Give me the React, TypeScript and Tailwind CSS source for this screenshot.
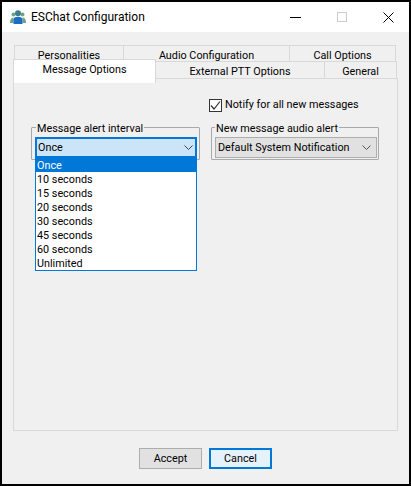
import React from "react";

const font = { fontFamily: 'Roboto, "Noto Sans", sans-serif' };

function Chevron({ color }: { color: string }) {
  return (
    <svg width="9" height="5" viewBox="0 0 9 5" fill="none">
      <path d="M0.5 0.5 L4.5 4.5 L8.5 0.5" stroke={color} strokeWidth="1" />
    </svg>
  );
}

function Logo() {
  return (
    <svg width="16" height="14" viewBox="0 0 16 14" className="-mt-px">
      <circle cx="3.5" cy="4.5" r="2" fill="#6fa384" />
      <circle cx="12.5" cy="4.5" r="2" fill="#6fa384" />
      <path d="M0 13 C0 10 1 7.5 3.5 7.5 L3.5 13 Z" fill="#6fa384" />
      <path d="M16 13 C16 10 15 7.5 12.5 7.5 L12.5 13 Z" fill="#6fa384" />
      <circle cx="8" cy="3.2" r="3" fill="#3f7f8c" />
      <path d="M3.5 14 L3.5 9.5 C3.5 7.5 6 6.8 8 6.8 C10 6.8 12.5 7.5 12.5 9.5 L12.5 14 Z" fill="#1a6fc4" />
    </svg>
  );
}

const items = ["10 seconds", "15 seconds", "20 seconds", "30 seconds", "45 seconds", "60 seconds", "Unlimited"];

export default function App() {
  return (
    <div
      className="w-[411px] h-[486px] border-2 border-black bg-[#f0f0f0] flex flex-col text-[10.8px] leading-[14px] text-[#000000] overflow-hidden"
      style={font}
    >
      <div className="h-[30px] bg-white flex items-center shrink-0">
        <div className="ml-[8px] w-[17px] flex"><Logo /></div>
        <span className="ml-[4px] text-[12px]">ESChat Configuration</span>
        <div className="ml-auto flex items-center">
          <div className="w-[11px] h-px bg-black mr-[36px]" />
          <div className="w-[10px] h-[10px] border border-[#cccccc] mr-[36px]" />
          <svg width="11" height="11" viewBox="0 0 11 11" className="mr-[15px]">
            <path d="M0.5 0.5 L10.5 10.5 M10.5 0.5 L0.5 10.5" stroke="#000" strokeWidth="1" />
          </svg>
        </div>
      </div>

      <div className="flex-1 flex flex-col px-[11px] pt-[13px]">
        <div className="flex h-[16px] ml-[1px] w-[382px] relative">
          <div className="w-[110px] border border-b-0 border-[#d9d9d9] text-center pt-[3px]">Personalities</div>
          <div className="w-[166px] border border-b-0 border-l-0 border-[#d9d9d9] text-center pt-[3px]">Audio Configuration</div>
          <div className="w-[106px] border border-b-0 border-l-0 border-[#d9d9d9] text-center pt-[3px]">Call Options</div>
        </div>
        <div className="flex h-[18px] w-[384px] relative z-10">
          <div className="w-[143px] h-[24px] -mt-[2px] bg-white border border-b-0 border-[#d9d9d9] text-center pt-[3px] z-10 relative">
            Message Options
            <div className="absolute left-0 right-0 top-[20px] h-[3px] bg-white" />
          </div>
          <div className="w-[169px] border border-l-0 border-[#d9d9d9] text-center pt-[3px]">External PTT Options</div>
          <div className="w-[72px] border border-l-0 border-[#d9d9d9] text-center pt-[3px]">General</div>
        </div>

        <div className="w-[385px] h-[353px] border border-[#d9d9d9] bg-[#f0f0f0] px-[17px] shrink-0 -mt-px">
          <div className="flex items-center h-[14px] mt-[19px] ml-[178px]">
            <div className="w-[13px] h-[13px] border border-[#333333] bg-white flex items-center justify-center shrink-0">
              <svg width="11" height="11" viewBox="0 0 11 11" fill="none">
                <path d="M1 5.5 L4 9 L10 1.5" stroke="#333" strokeWidth="1.2" />
              </svg>
            </div>
            <span className="ml-[3px] whitespace-nowrap">Notify for all new messages</span>
          </div>

          <div className="flex mt-[15px] gap-[11px]">
            <div className="relative w-[169px] h-[33px] border border-[#a9a9a9] rounded-[1px] px-[3px] pt-[9px]">
              <span className="absolute left-[4px] -top-[6px] bg-[#f0f0f0] px-px whitespace-nowrap">Message alert interval</span>
              <div className="h-[21px] w-[162px] border-2 border-[#0078d7] bg-[#cce4f7] flex items-center pl-[1px] pr-[2px] justify-between">
                <span>Once</span>
                <Chevron color="#444444" />
              </div>
              <div className="absolute left-[3px] top-[29px] w-[162px] h-[114px] border border-[#0078d7] bg-white z-20">
                <div className="h-[14px] bg-[#0078d7] text-white pl-[1px] pt-px">Once</div>
                {items.map((t) => (
                  <div key={t} className="h-[14px] pl-[1px] pt-px">{t}</div>
                ))}
              </div>
            </div>
            <div className="relative w-[168px] h-[33px] border border-[#a9a9a9] rounded-[1px] px-[3px] pt-[9px]">
              <span className="absolute left-[3px] -top-[6px] bg-[#f0f0f0] px-px whitespace-nowrap">New message audio alert</span>
              <div className="h-[21px] w-[162px] border border-[#adadad] bg-[#e1e1e1] flex items-center pl-[2px] pr-[5px] justify-between">
                <span className="whitespace-nowrap">Default System Notification</span>
                <Chevron color="#555555" />
              </div>
            </div>
          </div>
        </div>

        <div className="flex mt-[17px] ml-[126px] gap-[7px]">
          <button className="w-[63px] h-[21px] border border-[#adadad] bg-[#e1e1e1] flex items-center justify-center">Accept</button>
          <button className="w-[63px] h-[21px] border-2 border-[#0078d7] bg-[#e5f1fb] flex items-center justify-center">Cancel</button>
        </div>
      </div>
    </div>
  );
}
